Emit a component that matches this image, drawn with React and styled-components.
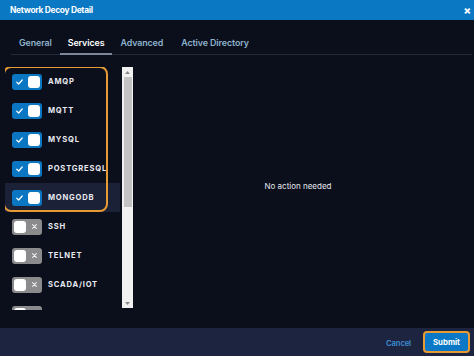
import React from 'react';
import styled, { createGlobalStyle } from 'styled-components';

const GlobalStyle = createGlobalStyle`
  html, body {
    margin: 0;
    padding: 0;
    background: #0b0f1c;
  }
  body {
    font-family: Inter, "Noto Sans", sans-serif;
  }
`;

const Modal = styled.div`
  width: 474px;
  height: 356px;
  display: flex;
  flex-direction: column;
  background: #0b0f1c;
  overflow: hidden;
`;

const Header = styled.div`
  height: 20px;
  flex-shrink: 0;
  background: #0a78c2;
  display: flex;
  align-items: center;
  justify-content: space-between;
  padding: 0 3px 0 10px;
  color: #ffffff;
`;

const Title = styled.span`
  font-size: 8.4px;
  font-weight: 700;
  letter-spacing: -0.3px;
`;

const Close = styled.span`
  font-size: 11px;
  font-weight: 800;
  line-height: 1;
`;

const TabBar = styled.div`
  display: flex;
  margin: 12px 2px 0 11px;
  height: 22px;
  border-bottom: 1px solid #232a3a;
`;

const Tab = styled.div`
  padding: 0 8px;
  margin-right: ${p => p.$gap || 0}px;
  display: flex;
  align-items: center;
  font-size: 8.9px;
  font-weight: 600;
  letter-spacing: -0.1px;
  color: ${p => (p.$active ? '#ffffff' : '#8eb2cc')};
  border-bottom: 2px solid ${p => (p.$active ? '#7d8798' : 'transparent')};
  margin-bottom: -1px;
`;

const Body = styled.div`
  flex: 1;
  display: flex;
  padding: 12px 0 0 5px;
`;

const ListPanel = styled.div`
  display: flex;
  align-items: flex-start;
  flex-shrink: 0;
`;

const Rows = styled.div`
  position: relative;
  width: 115px;
  height: 243px;
  overflow: hidden;
  display: flex;
  flex-direction: column;
`;

const Row = styled.div`
  height: 29px;
  flex-shrink: 0;
  display: flex;
  align-items: center;
  padding-left: 7px;
  gap: 6px;
  background: ${p => (p.$hover ? '#1b2137' : 'transparent')};
`;

const Toggle = styled.div`
  width: 30px;
  height: 16px;
  border-radius: 3px;
  background: ${p => (p.$on ? '#0b77c3' : '#8b8b8d')};
  display: flex;
  flex-direction: ${p => (p.$on ? 'row' : 'row-reverse')};
  align-items: center;
  justify-content: space-between;
  padding: ${p => (p.$on ? '0 2px 0 4px' : '0 5px 0 2px')};
  box-sizing: border-box;
`;

const Knob = styled.div`
  width: 12px;
  height: 12px;
  border-radius: 3px;
  background: #ffffff;
`;

const Label = styled.span`
  font-size: 7.6px;
  font-weight: 700;
  letter-spacing: 0.8px;
  color: #e8eaf0;
`;

const Highlight = styled.div`
  position: absolute;
  left: -2px;
  top: -1px;
  width: 105px;
  height: 146px;
  border: 2px solid #e59a34;
  border-radius: 8px;
  box-sizing: border-box;
  pointer-events: none;
`;

const Scrollbar = styled.div`
  width: 11px;
  height: 241px;
  margin-left: 2px;
  background: #f1f1f1;
  display: flex;
  flex-direction: column;
  align-items: center;
  box-sizing: border-box;
  padding: 0 1px;
`;

const Arrow = styled.div`
  height: 10px;
  display: flex;
  align-items: center;
  justify-content: center;
`;

const Thumb = styled.div`
  width: 8px;
  height: 130px;
  background: #c3c3c3;
`;

const Track = styled.div`
  flex: 1;
`;

const Detail = styled.div`
  flex: 1;
  height: 237px;
  display: flex;
  align-items: center;
  justify-content: center;
  padding-right: 11px;
  font-size: 8px;
  color: #e6e8ee;
`;

const Footer = styled.div`
  height: 28px;
  flex-shrink: 0;
  background: #1c2440;
  display: flex;
  align-items: center;
  justify-content: flex-end;
  padding-right: 4px;
  gap: 12px;
`;

const Cancel = styled.span`
  font-size: 7.6px;
  font-weight: 600;
  letter-spacing: -0.1px;
  color: #3e8fd2;
  margin-top: 2px;
`;

const Submit = styled.button`
  width: 47px;
  height: 22px;
  background: #0a78c6;
  border: 2px solid #e59a34;
  border-radius: 4px;
  color: #ffffff;
  font-family: inherit;
  font-size: 7.8px;
  font-weight: 700;
  padding: 0;
`;

const Check = () => (
  <svg width="7" height="6" viewBox="0 0 7 6">
    <path d="M0.8 3.2 L2.7 5 L6.2 1" fill="none" stroke="#fff" strokeWidth="1.2" strokeLinecap="round" strokeLinejoin="round" />
  </svg>
);

const Cross = () => (
  <svg width="5" height="5" viewBox="0 0 5 5">
    <path d="M0.6 0.6 L4.4 4.4 M4.4 0.6 L0.6 4.4" stroke="#eeeeee" strokeWidth="1.1" strokeLinecap="round" />
  </svg>
);

const Tri = ({ down }) => (
  <svg width="5" height="3" viewBox="0 0 5 3">
    <path d={down ? 'M0 0 L5 0 L2.5 3 Z' : 'M0 3 L5 3 L2.5 0 Z'} fill="#888" />
  </svg>
);

const services = [
  { name: 'AMQP', on: true },
  { name: 'MQTT', on: true },
  { name: 'MYSQL', on: true },
  { name: 'POSTGRESQL', on: true },
  { name: 'MONGODB', on: true, hover: true },
  { name: 'SSH', on: false },
  { name: 'TELNET', on: false },
  { name: 'SCADA/IOT', on: false },
  { name: '', on: false },
];

export default function App() {
  return (
    <>
      <GlobalStyle />
      <Modal>
        <Header>
          <Title>Network Decoy Detail</Title>
          <Close>×</Close>
        </Header>
        <TabBar>
          <Tab>General</Tab>
          <Tab $active>Services</Tab>
          <Tab $gap={2}>Advanced</Tab>
          <Tab>Active Directory</Tab>
        </TabBar>
        <Body>
          <ListPanel>
            <Rows>
              {services.map((s, i) => (
                <Row key={i} $hover={s.hover}>
                  <Toggle $on={s.on}>
                    {s.on ? <Check /> : <Cross />}
                    <Knob />
                  </Toggle>
                  <Label>{s.name}</Label>
                </Row>
              ))}
              <Highlight />
            </Rows>
            <Scrollbar>
              <Arrow><Tri /></Arrow>
              <Thumb />
              <Track />
              <Arrow><Tri down /></Arrow>
            </Scrollbar>
          </ListPanel>
          <Detail>No action needed</Detail>
        </Body>
        <Footer>
          <Cancel>Cancel</Cancel>
          <Submit>Submit</Submit>
        </Footer>
      </Modal>
    </>
  );
}
